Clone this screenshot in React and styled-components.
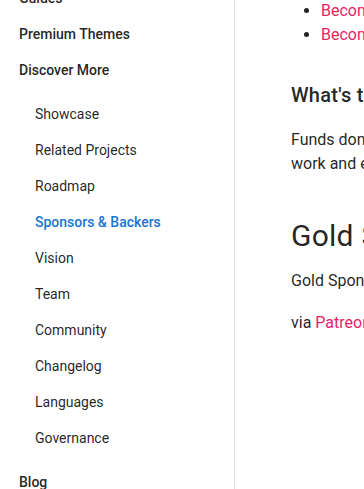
import React from "react";
import styled, { createGlobalStyle } from "styled-components";

const GlobalStyle = createGlobalStyle`
  html, body {
    margin: 0;
    padding: 0;
    background: #fff;
    overflow: hidden;
  }
  body {
    font-family: Roboto, "Liberation Sans", sans-serif;
    color: rgba(0, 0, 0, 0.87);
    -webkit-font-smoothing: antialiased;
  }
`;

const Page = styled.div`
  display: grid;
  grid-template-columns: 235px 1fr;
  height: 489px;
  overflow: hidden;
`;

const Drawer = styled.nav`
  box-sizing: border-box;
  border-right: 1px solid #e0e0e0;
  height: 100%;
  overflow: hidden;
`;

const NavList = styled.ul`
  list-style: none;
  margin: -20px 0 0;
  padding: 0;
`;

const NavItem = styled.li`
  height: 36px;
  display: flex;
  align-items: center;
  padding-left: ${(p) => (p.$sub ? "35px" : "19px")};
  font-size: 14px;
  font-weight: ${(p) => (p.$sub && !p.$active ? 400 : 500)};
  color: ${(p) => (p.$active ? "#1976d2" : "rgba(0, 0, 0, 0.87)")};
  white-space: nowrap;
  cursor: pointer;
`;

const SubGroup = styled.ul`
  list-style: none;
  margin: 0;
  padding: 8px 0;
`;

const Main = styled.main`
  padding-left: 56px;
  width: 760px;
  white-space: nowrap;
`;

const Bullets = styled.ul`
  margin: -1px 0 0;
  padding-left: 30px;
  font-size: 16px;
  line-height: 24px;
`;

const Link = styled.a`
  color: #e91e63;
  text-decoration: none;
`;

const Heading = styled.h3`
  margin: ${(p) => p.$margin};
  font-size: ${(p) => p.$size};
  line-height: ${(p) => p.$line};
  font-weight: ${(p) => p.$weight};
  letter-spacing: 0.25px;
  color: rgba(0, 0, 0, 0.87);
`;

const Text = styled.p`
  margin: ${(p) => p.$margin || "0"};
  font-size: 16px;
  line-height: 24px;
`;

const topItems = ["Guides", "Premium Themes", "Discover More"];
const discoverItems = [
  "Showcase",
  "Related Projects",
  "Roadmap",
  "Sponsors & Backers",
  "Vision",
  "Team",
  "Community",
  "Changelog",
  "Languages",
  "Governance",
];

export default function App() {
  return (
    <>
      <GlobalStyle />
      <Page>
        <Drawer>
          <NavList>
            {topItems.map((t) => (
              <NavItem key={t}>{t}</NavItem>
            ))}
            <li>
              <SubGroup>
                {discoverItems.map((t) => (
                  <NavItem key={t} $sub $active={t === "Sponsors & Backers"}>
                    {t}
                  </NavItem>
                ))}
              </SubGroup>
            </li>
            <NavItem>Blog</NavItem>
          </NavList>
        </Drawer>
        <Main>
          <Bullets>
            <li>
              <Link href="#">Become a backer on Patreon</Link>
            </li>
            <li>
              <Link href="#">Become a sponsor on Open Collective</Link>
            </li>
          </Bullets>
          <Heading $margin="32px 0 17px" $size="20px" $line="32px" $weight={500}>
            What's the difference between Patreon and Open Collective?
          </Heading>
          <Text>
            Funds donated via Patreon go directly to support John's full-time
            <br />
            work and expenses of the core team.
          </Text>
          <Heading $margin="40px 0 13px" $size="30px" $line="40px" $weight={400}>
            Gold Sponsors
          </Heading>
          <Text>Gold Sponsors are featured on the homepage of the docs.</Text>
          <Text $margin="18px 0 0">
            via <Link href="#">Patreon</Link>
          </Text>
        </Main>
      </Page>
    </>
  );
}
